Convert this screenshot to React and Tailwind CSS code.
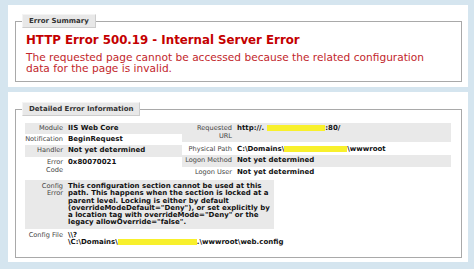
import React from "react";

const Redact = ({ className }) => (
  <span className={`inline-block h-[6px] bg-[#f8f02c] align-[-1px] ${className}`} />
);

const leftRows = [
  { label: "Module", value: "IIS Web Core", alt: true, h: "h-[11px]" },
  { label: "Notification", value: "BeginRequest", h: "h-[11px]" },
  { label: "Handler", value: "Not yet determined", alt: true, h: "h-[12px]" },
  { label: <>Error<br />Code</>, value: "0x80070021", h: "h-[23px]" },
];

const rightRows = [
  {
    label: <>Requested<br />URL</>,
    value: <>http://.<Redact className="w-[58px] ml-[3px]" />:80/</>,
    alt: true,
    h: "h-[19px]",
  },
  {
    label: "Physical Path",
    value: <>C:\Domains\<Redact className="w-[63px]" />\wwwroot</>,
    h: "h-[13px]",
    pt: "pt-[4px]",
  },
  { label: "Logon Method", value: "Not yet determined", alt: true, h: "h-[12px]" },
  { label: "Logon User", value: "Not yet determined", h: "h-[13px]" },
];

const Row = ({ row, labelW }) => (
  <div className={`flex items-start ${row.h} ${row.pt || "pt-[2px]"} ${row.alt ? "bg-[#e9e9e9]" : ""}`}>
    <div className={`${labelW} shrink-0 pr-[3px] text-right text-[6.6px] leading-[7.6px] text-[#444]`}>
      {row.label}
    </div>
    <div className="pl-[2px] text-[7px] leading-[7.6px] font-bold text-[#111] whitespace-nowrap">
      {row.value}
    </div>
  </div>
);

const Legend = ({ children }) => (
  <legend className="ml-[6px] h-[14px] px-[6px] bg-[#e8e8e8] border border-[#cdcdcd] border-l-[#f4f4f4] border-t-[#f4f4f4] text-[7px] leading-[12px] font-bold text-[#333]">
    {children}
  </legend>
);

export default function App() {
  return (
    <div className="w-[474px] h-[269px] overflow-hidden bg-[#d5e5ef] pt-[5px] pl-[8px] font-['DejaVu_Sans',sans-serif] flex flex-col gap-[5px]">
      {/* Error summary */}
      <div className="w-[460px] h-[82px] bg-white pt-[9px] pl-[7px] pr-[6px]">
        <fieldset className="border border-[#a9a9a9] h-[68px]">
          <Legend>Error Summary</Legend>
          <div className="pl-[10px] pt-[5px]">
            <h1 className="text-[11.8px] leading-[14px] font-bold text-[#c40000]">
              HTTP Error 500.19 - Internal Server Error
            </h1>
            <p className="mt-[5px] text-[10.6px] leading-[11px] text-[#c2262b]">
              The requested page cannot be accessed because the related configuration
              <br />
              data for the page is invalid.
            </p>
          </div>
        </fieldset>
      </div>

      {/* Detailed info */}
      <div className="w-[460px] h-[170px] bg-white pt-[10px] pl-[7px] pr-[6px]">
        <fieldset className="border border-[#a9a9a9] h-[156px]">
          <Legend>Detailed Error Information</Legend>
          <div className="pl-[9px] pt-[7px]">
            <div className="flex">
              <div className="w-[157px]">
                {leftRows.map((r, i) => (
                  <Row key={i} row={r} labelW="w-[41px]" />
                ))}
              </div>
              <div className="w-[269px]">
                {rightRows.map((r, i) => (
                  <Row key={i} row={r} labelW="w-[53px]" />
                ))}
              </div>
            </div>

            <div className="w-[249px]">
              <div className="flex items-start h-[49px] pt-[3px] bg-[#e9e9e9]">
                <div className="w-[41px] shrink-0 pr-[3px] text-right text-[6.6px] leading-[7.3px] text-[#444]">
                  Config
                  <br />
                  Error
                </div>
                <div className="pl-[2px] text-[7px] leading-[7.3px] font-bold text-[#111] whitespace-nowrap">
                  This configuration section cannot be used at this
                  <br />
                  path. This happens when the section is locked at a
                  <br />
                  parent level. Locking is either by default
                  <br />
                  (overrideModeDefault="Deny"), or set explicitly by
                  <br />
                  a location tag with overrideMode="Deny" or the
                  <br />
                  legacy allowOverride="false".
                </div>
              </div>
              <div className="flex items-start pt-[3px]">
                <div className="w-[41px] shrink-0 pr-[3px] text-right text-[6.6px] leading-[7px] text-[#444]">
                  Config File
                </div>
                <div className="pl-[2px] text-[7px] leading-[7px] font-bold text-[#111] whitespace-nowrap">
                  \\?
                  <br />
                  \C:\Domains\<Redact className="w-[79px]" />.\wwwroot\web.config
                </div>
              </div>
            </div>
          </div>
        </fieldset>
      </div>
    </div>
  );
}
